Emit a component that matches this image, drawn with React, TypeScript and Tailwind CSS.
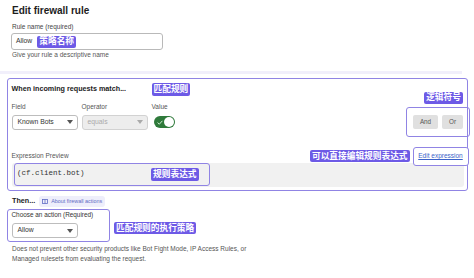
import React from "react";

const Tag = ({ children, className = "" }: { children: React.ReactNode; className?: string }) => (
  <span
    className={
      "inline-flex items-center h-[12px] px-[2px] rounded-[2px] bg-[#6d5ae6] text-white font-bold text-[8.7px] leading-none whitespace-nowrap " +
      className
    }
    style={{ fontFamily: '"Noto Sans CJK SC", "Liberation Sans", sans-serif' }}
  >
    {children}
  </span>
);

const Caret = ({ color = "#555" }: { color?: string }) => (
  <svg width="6" height="4" viewBox="0 0 6 4">
    <path d="M0 0 L6 0 L3 4 Z" fill={color} />
  </svg>
);

export default function App() {
  return (
    <div
      className="w-[474px] h-[278px] overflow-hidden bg-white text-[#222] pl-[12px]"
      style={{ fontFamily: '"Liberation Sans", "Noto Sans CJK SC", sans-serif' }}
    >
      <div className="h-[20px] leading-[21px] text-[10px] font-bold text-[#1d1d1d]">Edit firewall rule</div>
      <div className="mt-[2px] h-[10px] leading-[10px] text-[6.5px] text-[#444]">Rule name (required)</div>
      <div className="mt-[1px] -ml-[1px] w-[152px] h-[17px] border border-[#b9b9b9] rounded-[3px] flex items-center pl-[4px] gap-[5px]">
        <span className="text-[6.8px] text-[#333]">Allow</span>
        <Tag>策略名称</Tag>
      </div>
      <div className="h-[10px] leading-[10px] text-[6.5px] text-[#555]">Give your rule a descriptive name</div>
      <div className="mt-[11px] -ml-[12px] w-[462px] h-[3px] bg-[#f1effb]" />

      {/* main box */}
      <div className="mt-[4px] -ml-[5px] w-[461px] border-[1.5px] border-[#9084e4] rounded-[3px] pl-[3.5px] pr-[3.5px] pb-[3.5px]">
        <div className="flex justify-between">
          <div className="pt-[3.5px]">
            <div className="flex items-center h-[13px]">
              <span className="w-[140px] text-[7.2px] font-bold text-[#222]">When incoming requests match...</span>
              <Tag className="h-[13px]">匹配规则</Tag>
            </div>
            <div className="mt-[6px] flex gap-[4px] h-[10px] leading-[10px] text-[6.5px] text-[#555]">
              <span className="w-[66px]">Field</span>
              <span className="w-[66px]">Operator</span>
              <span>Value</span>
            </div>
            <div className="mt-[3px] flex gap-[4px] items-center h-[15px]">
              <div className="w-[66px] h-[15px] border border-[#bdbdbd] rounded-[3px] flex items-center justify-between pl-[5px] pr-[4px]">
                <span className="text-[6.8px] text-[#333]">Known Bots</span>
                <Caret />
              </div>
              <div className="w-[66px] h-[15px] border border-[#d2d2d2] bg-[#ededed] rounded-[3px] flex items-center justify-between pl-[5px] pr-[4px]">
                <span className="text-[6.8px] text-[#aaa]">equals</span>
                <Caret color="#aaa" />
              </div>
              <div className="ml-[2px] w-[21px] h-[12px] rounded-full bg-[#2f7a3b] flex items-center justify-between pl-[3px] pr-[1px]">
                <svg width="6" height="5" viewBox="0 0 6 5">
                  <path d="M0.6 2.6 L2.3 4.2 L5.4 0.8" stroke="#cdeccf" strokeWidth="1" fill="none" />
                </svg>
                <span className="w-[10px] h-[10px] rounded-full bg-white" />
              </div>
            </div>
          </div>
          <div className="flex flex-col items-center mr-[-6px] pt-[12.5px]">
            <Tag className="ml-[12px]">逻辑符号</Tag>
            <div className="mt-[3px] w-[64px] h-[30px] border-[1.5px] border-[#9084e4] rounded-[3px] flex items-center pl-[6.5px] gap-[4px]">
              <span className="w-[25px] h-[14px] rounded-[2px] bg-[#e0e0e0] text-[6.3px] text-[#555] flex items-center justify-center">And</span>
              <span className="w-[21px] h-[14px] rounded-[2px] bg-[#e0e0e0] text-[6.3px] text-[#555] flex items-center justify-center">Or</span>
            </div>
          </div>
        </div>

        <div className="mt-[10px] flex items-center justify-between">
          <span className="text-[6.5px] text-[#555]">Expression Preview</span>
          <div className="flex items-center gap-[3px] mr-[-5px]">
            <Tag>可以直接编辑规则表达式</Tag>
            <div className="relative z-10 w-[56px] h-[19px] bg-white border-[1.5px] border-[#9084e4] rounded-[3px] flex items-center justify-center">
              <span className="text-[6.5px] text-[#3a62c9] underline">Edit expression</span>
            </div>
          </div>
        </div>
        <div className="-mt-[3px] h-[24px] bg-[#f1f1f1] rounded-[3px] flex items-start pl-[2px]">
          <div className="w-[196px] h-[23px] border-[1.5px] border-[#9084e4] rounded-[3px] flex items-center justify-between pl-[2.5px] pr-[10px]">
            <span className="text-[7.5px] text-[#333]" style={{ fontFamily: '"Liberation Mono", monospace' }}>
              (cf.client.bot)
            </span>
            <Tag className="h-[13px]">规则表达式</Tag>
          </div>
        </div>
      </div>

      <div className="mt-[5px] flex items-center h-[11px] gap-[4px]">
        <span className="text-[7.2px] font-bold text-[#222]">Then...</span>
        <span className="h-[11px] px-[3px] rounded-[3px] bg-[#eeeefb] flex items-center gap-[3px] text-[5.4px] text-[#5f6cc4]">
          <svg width="6" height="5" viewBox="0 0 6 5">
            <rect x="0.5" y="0.5" width="5" height="4" fill="none" stroke="#5f6cc4" strokeWidth="0.8" />
            <line x1="3" y1="0.5" x2="3" y2="4.5" stroke="#5f6cc4" strokeWidth="0.8" />
          </svg>
          About firewall actions
        </span>
      </div>

      <div className="mt-[2px] -ml-[5px] flex items-start gap-[4px]">
        <div className="w-[103px] h-[33px] border-[1.5px] border-[#9084e4] rounded-[3px] pl-[3.5px]">
          <div className="h-[10px] leading-[10px] text-[6.4px] text-[#333]">Choose an action (Required)</div>
          <div className="mt-[3px] w-[66px] h-[15px] border border-[#bdbdbd] rounded-[3px] flex items-center justify-between pl-[5px] pr-[4px]">
            <span className="text-[6.8px] text-[#333]">Allow</span>
            <Caret />
          </div>
        </div>
        <Tag className="mt-[13px] h-[11px]">匹配规则的执行策略</Tag>
      </div>

      <div className="mt-[2px] text-[6.5px] leading-[10px] text-[#555]">
        <div>Does not prevent other security products like Bot Fight Mode, IP Access Rules, or</div>
        <div>Managed rulesets from evaluating the request.</div>
      </div>
    </div>
  );
}
